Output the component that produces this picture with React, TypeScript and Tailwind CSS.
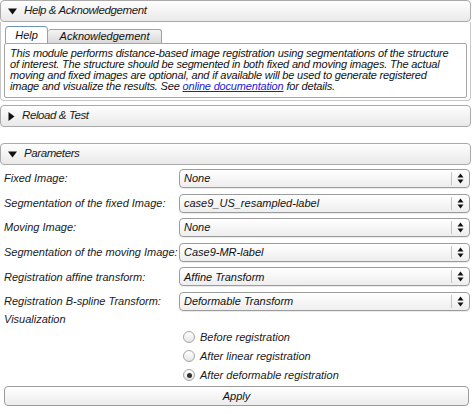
import React from 'react'

const font = { fontFamily: '"Liberation Sans", Arial, sans-serif' }

function Arrow({ open }: { open: boolean }) {
	return open ? (
		<svg width="9" height="7" viewBox="0 0 9 7" className="shrink-0">
			<path d="M0 0.5 H9 L4.5 6.5 Z" fill="#111" />
		</svg>
	) : (
		<svg width="7" height="9" viewBox="0 0 7 9" className="shrink-0">
			<path d="M0.5 0 V9 L6.5 4.5 Z" fill="#111" />
		</svg>
	)
}

function Header({ title, open }: { title: string; open: boolean }) {
	return (
		<div className="flex h-[22px] items-center gap-[7px] rounded-[4px] border border-[#a9a9a9] bg-linear-to-b from-[#fefefe] to-[#e9e9e9] pl-[7px] mr-[3px]">
			<Arrow open={open} />
			<span className="text-[11.5px] tracking-[-0.4px] italic text-[#1a1a1a]">{title}</span>
		</div>
	)
}

function UpDown() {
	return (
		<svg width="7" height="11" viewBox="0 0 7 11">
			<path d="M0.5 4.5 L3.5 0.5 L6.5 4.5 Z" fill="#111" />
			<path d="M0.5 6.5 L3.5 10.5 L6.5 6.5 Z" fill="#111" />
		</svg>
	)
}

function Combo({ label, value }: { label: string; value: string }) {
	return (
		<div className="flex h-[19px] items-center">
			<span className="w-[179px] shrink-0 whitespace-nowrap pl-[4px] text-[11px] italic text-[#1a1a1a]">{label}</span>
			<div className="flex h-[19px] flex-1 items-center rounded-[4px] border border-[#9c9c9c] bg-linear-to-b from-[#ffffff] to-[#eeeeee] mr-[4px] shadow-[0_1px_0_rgba(0,0,0,0.08)]">
				<span className="flex-1 pl-[4px] text-[11px] italic text-[#111]">{value}</span>
				<div className="h-[13px] w-px bg-[#c4c4c4]" />
				<div className="flex w-[17px] justify-center">
					<UpDown />
				</div>
			</div>
		</div>
	)
}

function Radio({ label, checked }: { label: string; checked?: boolean }) {
	return (
		<div className="flex h-[19px] items-center pl-[183px]">
			<div className="flex h-[12px] w-[12px] items-center justify-center rounded-full border border-[#a4a4a4] bg-linear-to-b from-[#ffffff] to-[#e6e6e6]">
				{checked && <div className="h-[5px] w-[5px] rounded-full bg-[#333]" />}
			</div>
			<span className="pl-[5px] text-[11px] italic text-[#1a1a1a]">{label}</span>
		</div>
	)
}

export default function App() {
	return (
		<div className="h-[413px] w-[474px] overflow-hidden bg-white" style={font}>
			<Header title="Help & Acknowledgement" open />
			<div className="mr-[3px] h-[79px] rounded-b-[4px] border-x border-b border-[#c8c8c8] px-[3px] pt-[3px]">
				<div className="flex h-[18px] items-end pl-[1px]">
					<div className="flex h-[17px] w-[43px] items-center justify-center rounded-t-[4px] border-x border-t border-[#a0a0a0] border-t-[#6f93b8] bg-white text-[11px] italic text-[#111]">
						Help
					</div>
					<div className="flex h-[14px] w-[114px] items-center justify-center rounded-t-[3px] border-r border-t border-[#a0a0a0] bg-linear-to-b from-[#f4f4f4] to-[#d9d9d9] text-[11px] italic text-[#111]">
						Acknowledgement
					</div>
				</div>
				<div className="h-[55px] rounded-[2px] border border-[#a6a6a6] bg-white px-[5px] pt-[4px] text-[11px] leading-[11px] tracking-[-0.18px] italic whitespace-nowrap text-[#111]">
					This module performs distance-based image registration using segmentations of the structure
					<br />
					of interest. The structure should be segmented in both fixed and moving images. The actual
					<br />
					moving and fixed images are optional, and if available will be used to generate registered
					<br />
					image and visualize the results. See{' '}
					<span className="text-[#1a1adc] underline">online documentation</span> for details.
				</div>
			</div>
			<div className="mt-[4px]">
				<Header title="Reload & Test" open={false} />
			</div>
			<div className="mt-[16px]">
				<Header title="Parameters" open />
			</div>
			<div className="mt-[4px] flex flex-col gap-[5.6px]">
				<Combo label="Fixed Image:" value="None" />
				<Combo label="Segmentation of the fixed Image:" value="case9_US_resampled-label" />
				<Combo label="Moving Image:" value="None" />
				<Combo label="Segmentation of the moving Image:" value="Case9-MR-label" />
				<Combo label="Registration affine transform:" value="Affine Transform" />
				<Combo label="Registration B-spline Transform:" value="Deformable Transform" />
			</div>
			<div className="flex h-[17px] items-center pl-[4px] text-[11px] italic text-[#1a1a1a]">Visualization</div>
			<div className="flex flex-col">
				<Radio label="Before registration" />
				<Radio label="After linear registration" />
				<Radio label="After deformable registration" checked />
			</div>
			<div className="ml-[4px] mr-[5px] mt-[1px] flex h-[20px] items-center justify-center rounded-[4px] border border-[#9c9c9c] bg-linear-to-b from-[#ffffff] to-[#ececec] text-[11px] italic text-[#111]">
				Apply
			</div>
		</div>
	)
}
